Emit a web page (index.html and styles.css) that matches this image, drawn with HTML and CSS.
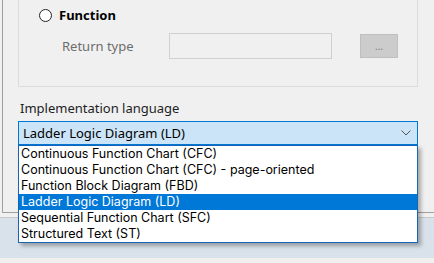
FILE: index.html
```html
<!DOCTYPE html>
<html>
<head>
<meta charset="utf-8"/>
<title>Add POU</title>
<link rel="stylesheet" href="styles.css">
</head>
<body>
<div class="dialog">
  <div class="tabpage">
    <div class="group">
      <div class="radio-row">
        <span class="radio"></span>
        <span class="radio-label">Function</span>
      </div>
      <div class="field-row">
        <span class="field-label">Return type</span>
        <span class="textbox"></span>
        <span class="btn">...</span>
      </div>
    </div>

    <div class="lang">
      <div class="lang-label">Implementation language</div>
      <div class="combo">
        <span>Ladder Logic Diagram (LD)</span>
        <svg class="chevron" width="10" height="6" viewBox="0 0 10 6"><path d="M0.5 0.5 L5 5 L9.5 0.5" fill="none" stroke="#555" stroke-width="1"/></svg>
      </div>
      <ul class="droplist">
        <li>Continuous Function Chart (CFC)</li>
        <li>Continuous Function Chart (CFC) - page-oriented</li>
        <li>Function Block Diagram (FBD)</li>
        <li class="selected">Ladder Logic Diagram (LD)</li>
        <li>Sequential Function Chart (SFC)</li>
        <li>Structured Text (ST)</li>
      </ul>
    </div>
  </div>
  <div class="footer"></div>
</div>
</body>
</html>
```

FILE: styles.css
```css
body {
   margin: 0;
   background-color: #f0f0f0;
   font-family: "Noto Sans", "Open Sans", sans-serif;
   font-size: 13px;
   color: #000;
}

.dialog {
   width: 434px;
   height: 263px;
   overflow: hidden;
}

/* tab page with its left and bottom edge */
.tabpage {
   position: relative;
   box-sizing: border-box;
   margin-left: 2px;
   height: 225px;
   border-left: 1px solid #a0a0a0;
   border-bottom: 1px solid #a0a0a0;
}

.group {
   box-sizing: border-box;
   margin-left: 15px;
   margin-top: -12px;
   width: 400px;
   height: 99px;
   border: 1px solid #dcdcdc;
   padding: 19px 0 0 20px;
}

.radio-row {
   display: flex;
   align-items: center;
   height: 14px;
}

.radio {
   box-sizing: border-box;
   width: 13px;
   height: 13px;
   border: 1px solid #222;
   border-radius: 50%;
   background: #fff;
}

.radio-label {
   margin-left: 7px;
   font-weight: bold;
   font-size: 13px;
}

.field-row {
   display: flex;
   align-items: center;
   margin-top: 11px;
   height: 26px;
}

.field-label {
   margin-left: 23px;
   width: 107px;
   color: #6d6d6d;
}

.textbox {
   box-sizing: border-box;
   width: 163px;
   height: 26px;
   border: 1px solid #d0d0d0;
   background: #f0f0f0;
}

.btn {
   box-sizing: border-box;
   margin-left: 28px;
   width: 38px;
   height: 24px;
   border: 1px solid #bfbfbf;
   background: #cccccc;
   color: #838383;
   font-size: 10px;
   display: flex;
   align-items: center;
   justify-content: center;
}

.lang {
   position: relative;
   margin-left: 15px;
   margin-top: 12px;
}

.lang-label {
   margin-left: 2px;
   height: 22px;
   color: #1e1e1e;
}

.combo {
   box-sizing: border-box;
   display: flex;
   align-items: center;
   justify-content: space-between;
   width: 400px;
   height: 24px;
   padding: 0 6px 0 4px;
   border: 1px solid #0078d7;
   background: #cce4f7;
}

.droplist {
   position: absolute;
   left: 0;
   top: 46px;
   width: 400px;
   box-sizing: border-box;
   margin: 0;
   padding: 0;
   list-style: none;
   background: #fff;
   border: 1px solid #1565b5;
   box-shadow: 3px 3px 4px rgba(0, 0, 0, 0.3);
   font-family: Inter, "Noto Sans", sans-serif;
   font-size: 12.5px;
}

.droplist li {
   height: 16px;
   line-height: 16px;
   padding-left: 2px;
}

.droplist li.selected {
   background: #0078d7;
   color: #fff;
}

.footer {
   margin-top: 4px;
   border-top: 1px solid #c8c8c8;
   height: 40px;
   background: #d9e1ea;
}
```
